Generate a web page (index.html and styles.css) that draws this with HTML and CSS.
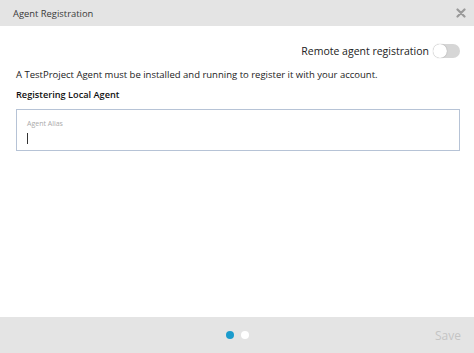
FILE: index.html
```html
<!DOCTYPE html>
<html>
<head>
<meta charset="utf-8">
<link rel="stylesheet" href="styles.css">
</head>
<body>
<div class="modal">
  <div class="header">
    <span class="title">Agent Registration</span>
    <span class="close">
      <svg width="10" height="10" viewBox="0 0 10 10"><path d="M1.5 1.5 L8.5 8.5 M8.5 1.5 L1.5 8.5" stroke="#9a9a9a" stroke-width="2.2" stroke-linecap="round"/></svg>
    </span>
  </div>
  <div class="body">
    <div class="remote">
      <span class="remote-label">Remote agent registration</span>
      <span class="toggle"><span class="knob"></span></span>
    </div>
    <p class="info">A TestProject Agent must be installed and running to register it with your account.</p>
    <h3 class="section">Registering Local Agent</h3>
    <div class="field">
      <div class="field-label">Agent Alias</div>
      <div class="field-input"><span class="caret"></span></div>
    </div>
  </div>
  <div class="footer">
    <div class="dots"><span class="dot active"></span><span class="dot"></span></div>
    <span class="save">Save</span>
  </div>
</div>
</body>
</html>
```
FILE: styles.css
```css
html, body {
  margin: 0;
  padding: 0;
  background: #fff;
}
body {
  font-family: "Open Sans", "Liberation Sans", sans-serif;
  color: #222;
  font-size: 9.5px;
}
.modal {
  width: 474px;
  height: 353px;
  display: flex;
  flex-direction: column;
}
.header {
  height: 26px;
  background: #e4e4e4;
  display: flex;
  align-items: center;
  justify-content: space-between;
  padding: 0 8px 0 13px;
  flex-shrink: 0;
}
.title {
  font-size: 9.4px;
  color: #3a3a3a;
}
.close {
  display: flex;
  width: 10px;
  height: 10px;
}
.body {
  flex: 1;
  padding: 0 14px 0 16px;
}
.remote {
  display: flex;
  justify-content: flex-end;
  align-items: center;
  margin-top: 18px;
  height: 14px;
}
.remote-label {
  font-size: 10.5px;
  color: #222;
  margin-right: 4px;
}
.toggle {
  width: 27px;
  height: 14px;
  border-radius: 7px;
  background: #d6d6d6;
  position: relative;
  display: inline-block;
}
.knob {
  position: absolute;
  left: 0;
  top: 0;
  width: 14px;
  height: 14px;
  border-radius: 50%;
  background: #fff;
  box-shadow: 0 0 1px rgba(0,0,0,0.4);
}
.info {
  margin: 10px 0 0;
  font-size: 9.5px;
  line-height: 14px;
  color: #222;
}
.section {
  margin: 6px 0 0;
  font-size: 9.2px;
  line-height: 14px;
  font-weight: 600;
  color: #111;
}
.field {
  margin-top: 7px;
  height: 40px;
  border: 1px solid #b6c3d6;
  padding: 0 10px;
}
.field-label {
  font-size: 7px;
  color: #aaa;
  margin-top: 9px;
  line-height: 9px;
}
.field-input {
  margin-top: 4px;
  height: 12px;
  display: flex;
  align-items: center;
}
.caret {
  width: 1px;
  height: 11px;
  background: #333;
}
.footer {
  height: 36px;
  background: #e4e4e4;
  flex-shrink: 0;
  display: flex;
  align-items: center;
  justify-content: center;
  position: relative;
}
.dots {
  display: flex;
  gap: 7px;
}
.dot {
  width: 8px;
  height: 8px;
  border-radius: 50%;
  background: #fff;
}
.dot.active {
  background: #1a9bcc;
}
.save {
  position: absolute;
  right: 13px;
  top: 50%;
  transform: translateY(-50%);
  font-size: 12px;
  color: #c4c4c4;
}
```
